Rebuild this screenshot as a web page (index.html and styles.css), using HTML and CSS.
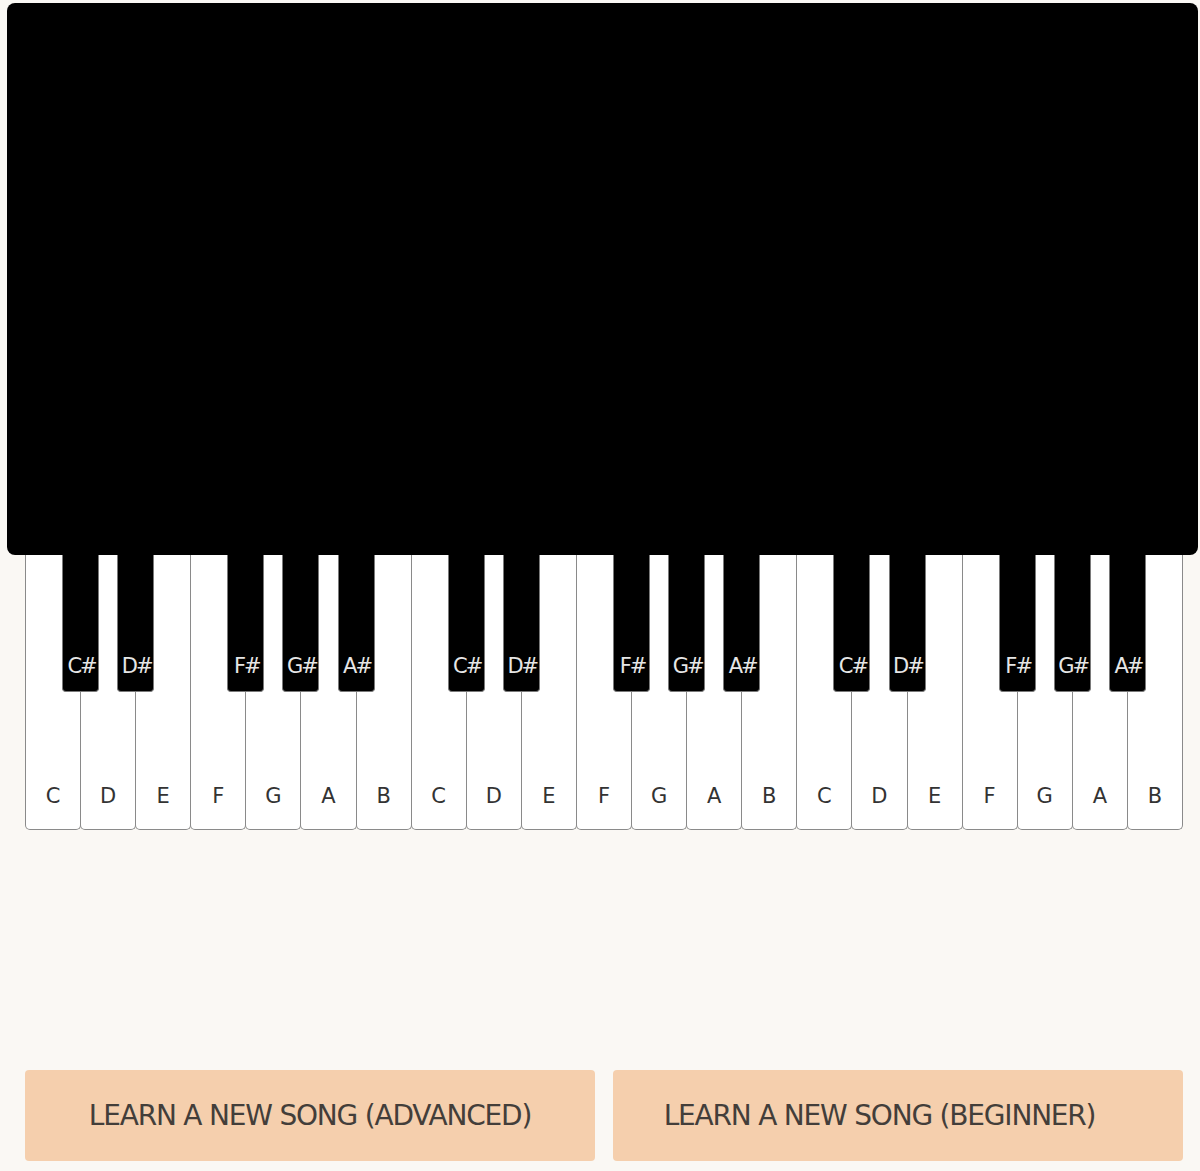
FILE: index.html
```html
<!DOCTYPE html>
<html>
<head>
<meta charset="utf-8">
<link rel="stylesheet" href="styles.css">
</head>
<body>
<div class="screen"></div>
<div class="piano">
  <div class="white"><span>C</span><div class="black"><span>C#</span></div></div>
  <div class="white"><span>D</span><div class="black"><span>D#</span></div></div>
  <div class="white"><span>E</span></div>
  <div class="white"><span>F</span><div class="black"><span>F#</span></div></div>
  <div class="white"><span>G</span><div class="black"><span>G#</span></div></div>
  <div class="white"><span>A</span><div class="black"><span>A#</span></div></div>
  <div class="white"><span>B</span></div>
  <div class="white"><span>C</span><div class="black"><span>C#</span></div></div>
  <div class="white"><span>D</span><div class="black"><span>D#</span></div></div>
  <div class="white"><span>E</span></div>
  <div class="white"><span>F</span><div class="black"><span>F#</span></div></div>
  <div class="white"><span>G</span><div class="black"><span>G#</span></div></div>
  <div class="white"><span>A</span><div class="black"><span>A#</span></div></div>
  <div class="white"><span>B</span></div>
  <div class="white"><span>C</span><div class="black"><span>C#</span></div></div>
  <div class="white"><span>D</span><div class="black"><span>D#</span></div></div>
  <div class="white"><span>E</span></div>
  <div class="white"><span>F</span><div class="black"><span>F#</span></div></div>
  <div class="white"><span>G</span><div class="black"><span>G#</span></div></div>
  <div class="white"><span>A</span><div class="black"><span>A#</span></div></div>
  <div class="white"><span>B</span></div>
</div>
<div class="actions">
  <button class="btn">LEARN A NEW SONG (ADVANCED)</button>
  <button class="btn btn-right">LEARN A NEW SONG (BEGINNER)</button>
</div>
</body>
</html>
```
FILE: styles.css
```css
html, body {
  margin: 0;
  padding: 0;
  background: #faf8f4;
  font-family: "DejaVu Sans", "Noto Sans", sans-serif;
}
body {
  height: 1171px;
  overflow: hidden;
}
.screen {
  margin: 3px 2px 0 7px;
  height: 552px;
  background: #000;
  border-radius: 8px;
  position: relative;
  z-index: 2;
}
.piano {
  margin: -1px 17px 0 25px;
  height: 276px;
  display: flex;
}
.white {
  flex: 1 1 0;
  position: relative;
  background: #fff;
  border: 1px solid #8a8a8a;
  border-top: none;
  border-radius: 0 0 5px 5px;
  margin-right: -1px;
  display: flex;
  align-items: flex-end;
  justify-content: center;
  padding-bottom: 21px;
  box-sizing: border-box;
}
.white:last-child { margin-right: 0; }
.white > span {
  font-size: 21px;
  color: #333;
}
.black {
  position: absolute;
  top: 0;
  right: -19px;
  width: 37px;
  height: 138px;
  background: #000;
  border: 1px solid #7a7a7a;
  border-top: none;
  border-radius: 0 0 4px 4px;
  box-sizing: border-box;
  z-index: 1;
  display: flex;
  align-items: flex-end;
  justify-content: center;
  padding-bottom: 13px;
}
.black > span {
  font-size: 21px;
  color: #e6e6e6;
  letter-spacing: -2px;
  margin-right: -2px;
}
.actions {
  margin: 240px 17px 0 25px;
  display: grid;
  grid-template-columns: 1fr 1fr;
  gap: 18px;
}
.btn {
  height: 91px;
  background: #f5cfad;
  border: none;
  border-radius: 4px;
  font-family: "DejaVu Sans", "Noto Sans", sans-serif;
  font-size: 28px;
  color: #433e3a;
  letter-spacing: -1.2px;
  padding: 0;
}
.btn-right {
  padding-right: 37px;
}
```
